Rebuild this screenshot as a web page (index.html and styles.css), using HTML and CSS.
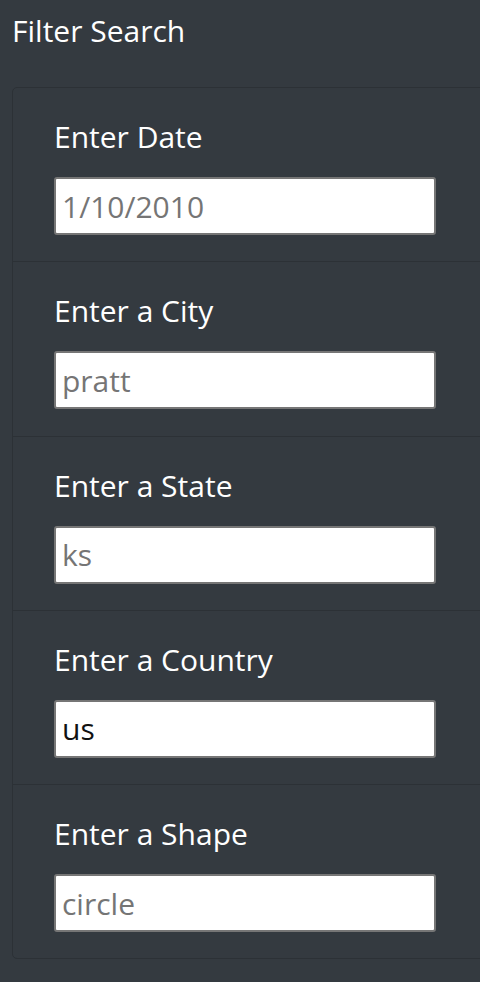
FILE: index.html
```html
<!DOCTYPE html>
<html>
<head>
<meta charset="utf-8">
<link rel="stylesheet" href="styles.css">
</head>
<body>
<div class="page">
  <h2 class="title">Filter Search</h2>
  <ul class="card">
    <li class="item">
      <label class="label" for="date">Enter Date</label>
      <input class="field" id="date" type="text" placeholder="1/10/2010">
    </li>
    <li class="item">
      <label class="label" for="city">Enter a City</label>
      <input class="field" id="city" type="text" placeholder="pratt">
    </li>
    <li class="item">
      <label class="label" for="state">Enter a State</label>
      <input class="field" id="state" type="text" placeholder="ks">
    </li>
    <li class="item">
      <label class="label" for="country">Enter a Country</label>
      <input class="field" id="country" type="text" value="us">
    </li>
    <li class="item">
      <label class="label" for="shape">Enter a Shape</label>
      <input class="field" id="shape" type="text" placeholder="circle">
    </li>
  </ul>
</div>
</body>
</html>
```

FILE: styles.css
```css
html, body {
  margin: 0;
  padding: 0;
  background: #343a40;
  overflow: hidden;
}
body {
  font-family: "Open Sans", "Noto Sans", sans-serif;
  color: #fff;
}
.page {
  width: 520px;
  padding: 0 0 0 12px;
}
.title {
  margin: 0;
  height: 87px;
  padding-top: 11px;
  box-sizing: border-box;
  font-size: 30px;
  font-weight: 400;
  line-height: 40px;
  color: #fff;
}
.card {
  list-style: none;
  margin: 0;
  padding: 0;
  width: 500px;
  border: 1px solid #2c3136;
  border-radius: 5px;
}
.item {
  display: flex;
  flex-direction: column;
  align-items: flex-start;
  padding: 28px 0 26.3px 41px;
  border-top: 1px solid #2c3136;
}
.item:first-child {
  border-top: none;
}
.label {
  font-size: 30px;
  line-height: 42px;
  margin-bottom: 19px;
}
.field {
  width: 382px;
  height: 58px;
  box-sizing: border-box;
  border: 2px solid #767676;
  border-radius: 3px;
  background: #fff;
  padding: 0 6px;
  font-family: "Open Sans", "Noto Sans", sans-serif;
  font-size: 30px;
  color: #111;
  outline: none;
}
.field::placeholder {
  color: #757575;
  opacity: 1;
}
```
